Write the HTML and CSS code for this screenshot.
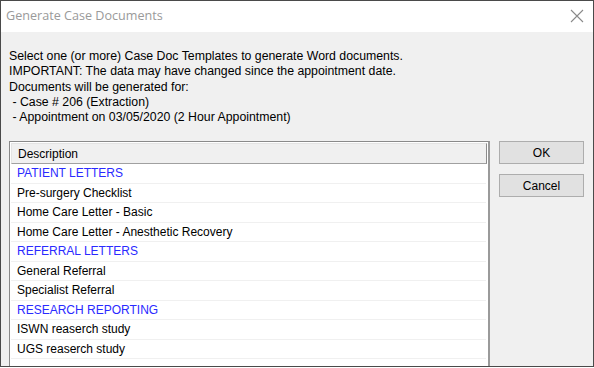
FILE: index.html
```html
<!DOCTYPE html>
<html>
<head>
<meta charset="utf-8">
<link rel="stylesheet" href="styles.css">
</head>
<body>
<div class="window">
  <div class="titlebar">
    <span class="title">Generate Case Documents</span>
    <svg class="close" width="14" height="14" viewBox="0 0 14 14"><path d="M1 1 L13 13 M13 1 L1 13" stroke="#8a8a8a" stroke-width="1.1" fill="none"/></svg>
  </div>
  <div class="body">
    <div class="intro">
      <p class="line">Select one (or more) Case Doc Templates to generate Word documents.</p>
      <p class="line">IMPORTANT: The data may have changed since the appointment date.</p>
      <p class="line gap">Documents will be generated for:</p>
      <p class="line">&nbsp;- Case # 206 (Extraction)</p>
      <p class="line">&nbsp;- Appointment on 03/05/2020 (2 Hour Appointment)</p>
    </div>
    <div class="main">
      <div class="listbox">
        <div class="header"><span>Description</span></div>
        <div class="row group">PATIENT LETTERS</div>
        <div class="row">Pre-surgery Checklist</div>
        <div class="row">Home Care Letter - Basic</div>
        <div class="row">Home Care Letter - Anesthetic Recovery</div>
        <div class="row group">REFERRAL LETTERS</div>
        <div class="row">General Referral</div>
        <div class="row">Specialist Referral</div>
        <div class="row group">RESEARCH REPORTING</div>
        <div class="row">ISWN reaserch study</div>
        <div class="row">UGS reaserch study</div>
      </div>
      <div class="buttons">
        <button class="btn">OK</button>
        <button class="btn">Cancel</button>
      </div>
    </div>
  </div>
</div>
</body>
</html>
```
FILE: styles.css
```css
html, body {
  margin: 0;
  padding: 0;
  background: #ffffff;
}
.window {
  box-sizing: border-box;
  width: 594px;
  height: 367px;
  border: 1px solid #4a4a4a;
  background: #f0f0f0;
  display: flex;
  flex-direction: column;
  overflow: hidden;
  font-family: "Liberation Sans", Arial, sans-serif;
  font-size: 12.3px;
  color: #000;
}
.titlebar {
  height: 31px;
  flex: none;
  background: #ffffff;
  display: flex;
  align-items: center;
  justify-content: space-between;
  padding: 0 9px 0 5px;
}
.title {
  font-family: "Open Sans", "Noto Sans", sans-serif;
  font-size: 12.6px;
  color: #9a9a9a;
  margin-top: -2px;
}
.close {
  margin-top: -1px;
}
.body {
  flex: 1;
  display: flex;
  flex-direction: column;
  padding: 17px 0 0 8px;
  min-height: 0;
}
.intro .line {
  margin: 0;
  line-height: 15px;
  white-space: pre;
}
.intro .line.gap {
  margin-top: 1px;
}
.main {
  flex: 1;
  display: flex;
  margin-top: 16px;
  min-height: 0;
}
.listbox {
  box-sizing: border-box;
  width: 481px;
  border: 1px solid #8a8a8a;
  border-right: 2px solid #9a9a9a;
  border-bottom: none;
  background: #ffffff;
  padding: 1px 1px 0 1px;
}
.header {
  box-sizing: border-box;
  height: 21px;
  width: 476px;
  background: #f0f0f0;
  border: 1px solid #e4e4e4;
  border-right: 1px solid #8c8c8c;
  border-bottom: 1px solid #a0a0a0;
  display: flex;
  align-items: center;
  padding-left: 6px;
  font-size: 12px;
}
.row {
  box-sizing: border-box;
  height: 19.5px;
  width: 475px;
  border-bottom: 1px solid #f0f0f0;
  display: flex;
  align-items: center;
  padding-left: 6px;
  font-size: 12px;
}
.row.group {
  color: #2a2aff;
}
.buttons {
  display: flex;
  flex-direction: column;
  gap: 10px;
  margin-left: 9px;
}
.btn {
  box-sizing: border-box;
  width: 85px;
  height: 23px;
  background: #e1e1e1;
  border: 1px solid #adadad;
  font-family: "Liberation Sans", Arial, sans-serif;
  font-size: 12px;
  color: #000;
  padding: 0;
}
```
